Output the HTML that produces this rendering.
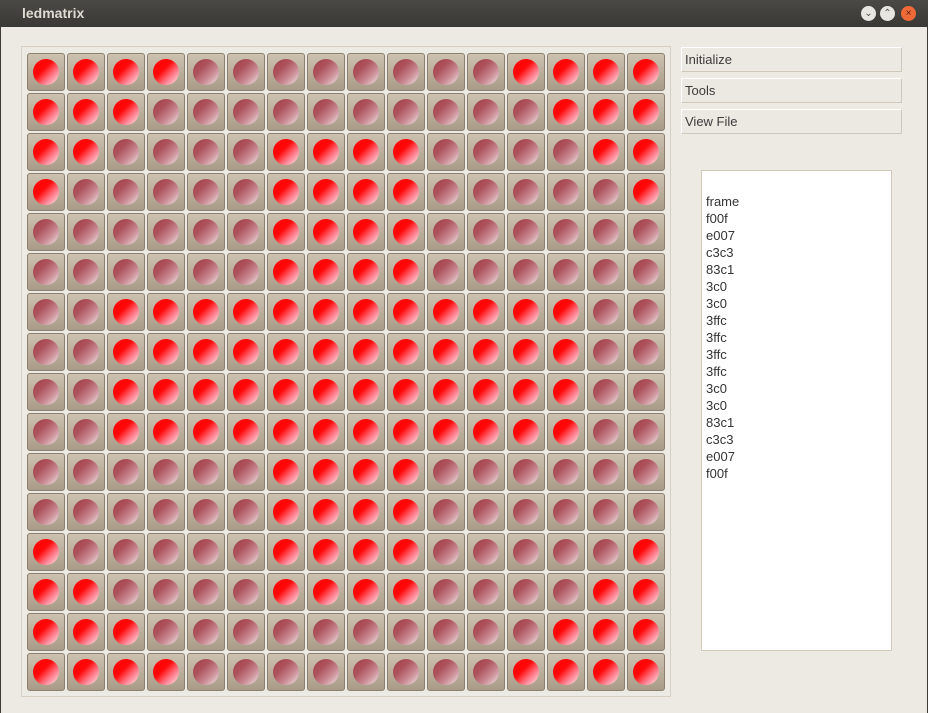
<!DOCTYPE html>
<html><head><style>
*{margin:0;padding:0;box-sizing:border-box}
body{width:928px;height:713px;background:#3c3b37;font-family:"Liberation Sans","DejaVu Sans",sans-serif;position:relative;overflow:hidden}
#title{position:absolute;left:0;top:0;width:928px;height:27px;background:linear-gradient(#4a4945,#393834);color:#dfdbd2;font-weight:bold;font-size:14px;line-height:27px;padding-left:22px}
#win{position:absolute;left:1px;top:27px;width:926px;height:686px;background:#edeae3}
#frame{position:absolute;left:21px;top:46px;width:650px;height:651px;border:1px solid #d6cfc2}
.c{position:absolute;width:38px;height:38px;border:1px solid #8c8070;border-radius:3px;background:linear-gradient(#cdc2b0,#a89b87)}
.c i{position:absolute;left:5px;top:5px;width:26px;height:26px;border-radius:50%;background:linear-gradient(135deg,#a23f4a 0%,#ad525c 35%,#c98a92 65%,#f4e6ea 100%)}
.c.on i{background:linear-gradient(135deg,#ff0000 0%,#ff0808 40%,#ff7080 65%,#fff0f2 100%)}
.b{position:absolute;left:681px;width:221px;height:25px;border:1px solid #cfc8bb;border-top-color:#fff;border-left-color:#fff;background:#ece9e2;font-size:13px;color:#3c3c3c;line-height:23px;padding-left:3px}
#ta{position:absolute;left:701px;top:170px;width:191px;height:481px;background:#fff;border:1px solid #d3c9b8;padding:22px 0 0 4px;font-size:13px;line-height:17px;color:#333}
.wb{position:absolute;top:6px;width:15px;height:15px;border-radius:50%;background:#e8e6e1;font-size:10px;text-align:center;line-height:15px;color:#555}
</style></head><body>
<div id="title">ledmatrix</div>
<div class="wb" style="left:861px">&#8964;</div>
<div class="wb" style="left:880px">&#8963;</div>
<div class="wb" style="left:901px;background:#f06a38;color:#5a2010">&#215;</div>
<div id="win"></div>
<div id="frame"></div>
<div id="grid"></div>
<div class="b" style="top:47px">Initialize</div>
<div class="b" style="top:78px">Tools</div>
<div class="b" style="top:109px">View File</div>
<div id="ta">frame<br>f00f<br>e007<br>c3c3<br>83c1<br>3c0<br>3c0<br>3ffc<br>3ffc<br>3ffc<br>3ffc<br>3c0<br>3c0<br>83c1<br>c3c3<br>e007<br>f00f</div>
<script>
var v=[0xf00f,0xe007,0xc3c3,0x83c1,0x3c0,0x3c0,0x3ffc,0x3ffc,0x3ffc,0x3ffc,0x3c0,0x3c0,0x83c1,0xc3c3,0xe007,0xf00f],h='';
for(var r=0;r<16;r++)for(var c=0;c<16;c++){var on=(v[r]>>(15-c))&1;h+='<div class="c'+(on?' on':'')+'" style="left:'+(27+c*40)+'px;top:'+(53+r*40)+'px"><i></i></div>';}
document.getElementById('grid').innerHTML=h;
</script>
</body></html>
